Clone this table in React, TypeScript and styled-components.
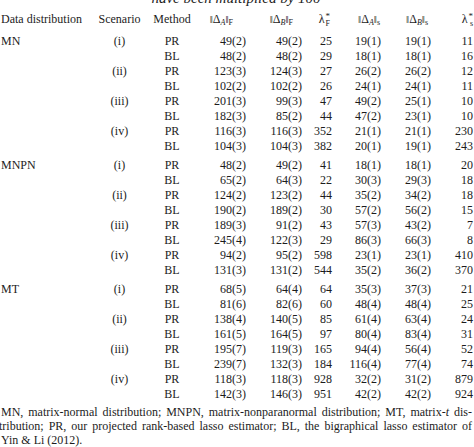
import React from "react";
import styled, { createGlobalStyle } from "styled-components";

const GlobalStyle = createGlobalStyle`
  html, body {
    margin: 0;
    padding: 0;
    background: #fff;
    overflow: hidden;
  }
  body {
    font-family: "Liberation Serif", "Times New Roman", serif;
    color: #1c1c1c;
  }
`;

const COLS = "95px 49px 56px 50px 56px 31px 49px 50px 38px";
const NUM_PAD = [4, 4, 5, 5, 5, 1];
const HEAD_PAD = [17, 13, 7, 6, 8, 1];

const Page = styled.div`
  width: 474px;
  height: 447px;
  overflow: hidden;
  font-size: 12px;
`;

const Title = styled.div`
  font-style: italic;
  font-size: 15px;
  line-height: 15px;
  height: 15px;
  margin-top: -9px;
  text-align: center;
  padding-right: 2px;
`;

const Row = styled.div<{ $gap?: number }>`
  display: grid;
  grid-template-columns: ${COLS};
  height: 15px;
  line-height: 15px;
  margin-top: ${(p) => p.$gap ?? 0}px;
  white-space: nowrap;
`;

const HeadRow = styled(Row)`
  margin-top: 6px;
  margin-bottom: 7px;
`;

const Label = styled.div`
  padding-left: 1px;
`;

const Centre = styled.div`
  text-align: center;
`;

const Num = styled.div<{ $pad: number }>`
  text-align: right;
  padding-right: ${(p) => p.$pad}px;
`;

const Bars = styled.span`
  font-size: 11px;
`;

const Sub = styled.span<{ $italic?: boolean }>`
  font-size: 8px;
  font-style: ${(p) => (p.$italic ? "italic" : "normal")};
  vertical-align: -2px;
`;

const Stack = styled.span`
  display: inline-flex;
  flex-direction: column;
  vertical-align: 4px;
  font-size: 8px;
  line-height: 7px;
  margin-left: 1px;
`;

const Star = styled.span`
  font-size: 9px;
`;

const Note = styled.div`
  margin-top: 3px;
  font-size: 12px;
  line-height: 14px;
  padding-left: 1px;
  padding-right: 2px;
`;

const NoteLine = styled.div<{ $justify?: boolean; $indent?: number }>`
  text-align: ${(p) => (p.$justify ? "justify" : "left")};
  text-align-last: ${(p) => (p.$justify ? "justify" : "left")};
  margin-left: ${(p) => p.$indent ?? 0}px;
  white-space: nowrap;
`;

const Norm = ({ m, s }: { m: string; s: string }) => (
  <span>
    <Bars>‖</Bars>Δ<Sub $italic>{m}</Sub>
    <Bars>‖</Bars>
    <Sub>{s}</Sub>
  </span>
);

const Lambda = ({ s }: { s: string }) => (
  <span>
    λ
    <Stack>
      <Star>*</Star>
      <span>{s}</span>
    </Stack>
  </span>
);

type Line = [string, string, string, string, string, string, string, string];

const data: { name: string; rows: Line[] }[] = [
  {
    name: "MN",
    rows: [
      ["(i)", "PR", "49(2)", "49(2)", "25", "19(1)", "19(1)", "11"],
      ["", "BL", "48(2)", "48(2)", "29", "18(1)", "18(1)", "16"],
      ["(ii)", "PR", "123(3)", "124(3)", "27", "26(2)", "26(2)", "12"],
      ["", "BL", "102(2)", "102(2)", "26", "24(1)", "24(1)", "11"],
      ["(iii)", "PR", "201(3)", "99(3)", "47", "49(2)", "25(1)", "10"],
      ["", "BL", "182(3)", "85(2)", "44", "47(2)", "23(1)", "10"],
      ["(iv)", "PR", "116(3)", "116(3)", "352", "21(1)", "21(1)", "230"],
      ["", "BL", "104(3)", "104(3)", "382", "20(1)", "19(1)", "243"],
    ],
  },
  {
    name: "MNPN",
    rows: [
      ["(i)", "PR", "48(2)", "49(2)", "41", "18(1)", "18(1)", "20"],
      ["", "BL", "65(2)", "64(3)", "22", "30(3)", "29(3)", "18"],
      ["(ii)", "PR", "124(2)", "123(2)", "44", "35(2)", "34(2)", "18"],
      ["", "BL", "190(2)", "189(2)", "30", "57(2)", "56(2)", "15"],
      ["(iii)", "PR", "189(3)", "91(2)", "43", "57(3)", "43(2)", "7"],
      ["", "BL", "245(4)", "122(3)", "29", "86(3)", "66(3)", "8"],
      ["(iv)", "PR", "94(2)", "95(2)", "598", "23(1)", "23(1)", "410"],
      ["", "BL", "131(3)", "131(2)", "544", "35(2)", "36(2)", "370"],
    ],
  },
  {
    name: "MT",
    rows: [
      ["(i)", "PR", "68(5)", "64(4)", "64", "35(3)", "37(3)", "21"],
      ["", "BL", "81(6)", "82(6)", "60", "48(4)", "48(4)", "25"],
      ["(ii)", "PR", "138(4)", "140(5)", "85", "61(4)", "63(4)", "24"],
      ["", "BL", "161(5)", "164(5)", "97", "80(4)", "83(4)", "31"],
      ["(iii)", "PR", "195(7)", "119(3)", "165", "94(4)", "56(4)", "52"],
      ["", "BL", "239(7)", "132(3)", "184", "116(4)", "77(4)", "74"],
      ["(iv)", "PR", "118(3)", "118(3)", "928", "32(2)", "31(2)", "879"],
      ["", "BL", "142(3)", "146(3)", "951", "42(2)", "42(2)", "924"],
    ],
  },
];

const heads = [
  <Norm m="A" s="F" />,
  <Norm m="B" s="F" />,
  <Lambda s="F" />,
  <Norm m="A" s="s" />,
  <Norm m="B" s="s" />,
  <Lambda s="s" />,
];

export default function App() {
  return (
    <Page>
      <GlobalStyle />
      <Title>have been multiplied by 100</Title>
      <HeadRow>
        <Label>Data distribution</Label>
        <Centre>Scenario</Centre>
        <Centre>Method</Centre>
        {heads.map((h, i) => (
          <Num key={i} $pad={HEAD_PAD[i]}>
            {h}
          </Num>
        ))}
      </HeadRow>
      {data.map((group, gi) =>
        group.rows.map((r, ri) => (
          <Row key={group.name + ri} $gap={ri === 0 && gi > 0 ? 4 : 0}>
            <Label>{ri === 0 ? group.name : ""}</Label>
            <Centre>{r[0]}</Centre>
            <Centre>{r[1]}</Centre>
            {r.slice(2).map((v, i) => (
              <Num key={i} $pad={NUM_PAD[i]}>
                {v}
              </Num>
            ))}
          </Row>
        ))
      )}
      <Note>
        <NoteLine $justify>
          MN, matrix-normal distribution; MNPN, matrix-nonparanormal
          distribution; MT, matrix-<i>t</i> dis-
        </NoteLine>
        <NoteLine $justify $indent={-2}>
          tribution; PR, our projected rank-based lasso estimator; BL, the
          bigraphical lasso estimator of
        </NoteLine>
        <NoteLine>Yin &amp; Li (2012).</NoteLine>
      </Note>
    </Page>
  );
}
